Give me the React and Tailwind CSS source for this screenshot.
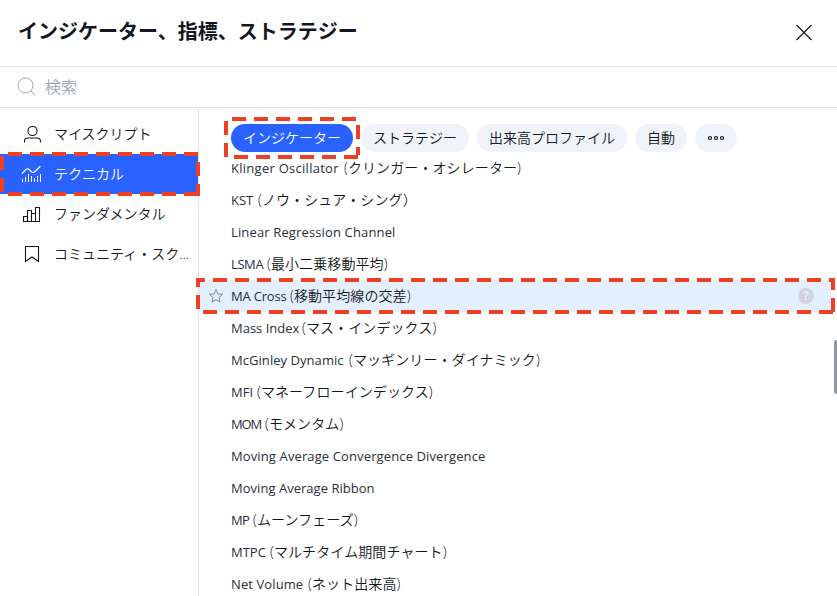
import clsx from 'clsx';

const nav = [
  { id: 'scripts', label: 'マイスクリプト', Icon: PersonIcon },
  { id: 'technical', label: 'テクニカル', Icon: TechnicalIcon, active: true },
  { id: 'fundamental', label: 'ファンダメンタル', Icon: BarsIcon },
  { id: 'community', label: 'コミュニティ・スク...', Icon: BookmarkIcon },
];

const chips = ['インジケーター', 'ストラテジー', '出来高プロファイル', '自動'];

const rows = [
  { latin: 'Klinger Oscillator', w: 'w-[113px] tracking-[0.27px]', ja: '(クリンガー・オシレーター)' },
  { latin: 'KST', w: 'w-[27px]', ja: '(ノウ・シュア・シング）' },
  { latin: 'Linear Regression Channel', w: 'w-[170px] tracking-[0.14px]' },
  { latin: 'LSMA', w: 'w-[36px] tracking-[-0.4px]', ja: '(最小二乗移動平均)' },
  { latin: 'MA Cross', w: 'w-[59px] tracking-[-0.2px]', ja: '(移動平均線の交差)', selected: true },
  { latin: 'Mass Index', w: 'w-[71px]', ja: '(マス・インデックス)' },
  { latin: 'McGinley Dynamic', w: 'w-[118px] tracking-[0.05px]', ja: '(マッギンリー・ダイナミック)' },
  { latin: 'MFI', w: 'w-[26px]', ja: '(マネーフローインデックス)' },
  { latin: 'MOM', w: 'w-[34px] tracking-[-1.2px]', ja: '(モメンタム)' },
  { latin: 'Moving Average Convergence Divergence', w: 'w-[260px] tracking-[0.12px]' },
  { latin: 'Moving Average Ribbon', w: 'w-[150px] tracking-[0.03px]' },
  { latin: 'MP', w: 'w-[22px] tracking-[-0.8px]', ja: '(ムーンフェーズ)' },
  { latin: 'MTPC', w: 'w-[39px]', ja: '(マルチタイム期間チャート)' },
  { latin: 'Net Volume', w: 'w-[77px] tracking-[0.1px]', ja: '(ネット出来高)' },
];

function PersonIcon() {
  return (
    <svg width="28" height="28" viewBox="0 0 28 28" fill="none" stroke="currentColor" strokeWidth="1.1">
      <rect x="10" y="6.5" width="9" height="9" rx="4.3" />
      <path d="M6.5 22.5v-1.2c0-2 1.5-3.3 3.5-3.3h9c2 0 3.5 1.3 3.5 3.3v1.2" />
    </svg>
  );
}

function TechnicalIcon() {
  return (
    <svg width="28" height="28" viewBox="0 0 28 28" fill="none" stroke="currentColor">
      <path d="M4 13.5l4.2-4.2q1.3-1 2.6 0l3 2.7q1.3 1 2.6 0l6-5.7" strokeWidth="1.2" />
      <path d="M4.5 19v3M7.5 17v5M10.5 14v8M13.5 16v6M16.5 18v4M19.5 16v6M22.5 14v8" />
    </svg>
  );
}

function BarsIcon() {
  return (
    <svg width="28" height="28" viewBox="0 0 28 28" fill="none" stroke="currentColor" strokeWidth="1.1">
      <path d="M5.5 21.5v-5h4v5M9.5 21.5v-11h4v11M13.5 13.5h4M17.5 21.5v-14h4v14M5 21.5h17" />
    </svg>
  );
}

function BookmarkIcon() {
  return (
    <svg width="28" height="28" viewBox="0 0 28 28" fill="none" stroke="currentColor" strokeWidth="1.1">
      <path d="M7.5 6.5h13v15l-6.5-4.5l-6.5 4.5z" />
    </svg>
  );
}

function Marker({ d, className }) {
  return (
    <svg className={clsx('absolute pointer-events-none overflow-visible', className)} fill="none">
      <path d={d} stroke="#ee4023" strokeWidth="4" strokeDasharray="14 8" />
    </svg>
  );
}

function Row({ latin, w, ja, selected }) {
  return (
    <li className={clsx('relative flex h-8 shrink-0 items-center pl-8', selected && 'bg-[#e3effd] mr-[6px]')}>
      {selected && (
        <svg className="absolute left-[9px] top-2" width="16" height="16" viewBox="0 0 16 16" fill="none" stroke="#868993">
          <path d="M8 1.5l1.9 4.4 4.7.4-3.6 3.1 1.1 4.7L8 11.6l-4.1 2.5L5 9.4 1.400 6.300l4.700-.4z" />
        </svg>
      )}
      <span className={clsx('whitespace-nowrap pt-px text-[13px] text-[#2a2e39]', w)}>{latin}</span>
      {ja && <span className="whitespace-nowrap pb-0.5 font-[350] tracking-[0.1px]">{ja}</span>}
      {selected && (
        <span className="absolute right-[17px] top-2 flex size-4 items-center justify-center rounded-full bg-[#d1d4dc] text-[12px] font-bold leading-none text-[#e9f2fd]">
          ?
        </span>
      )}
      {selected && (
        <Marker
          className="-left-[3px] -top-[2px] h-9 w-[639px]"
          d="M0 2h9M17 2H639M2 0v9M2 17v14M7 34H637M637 0v12M637 20v14"
        />
      )}
    </li>
  );
}

export default function App() {
  return (
    <div className="flex h-[596px] w-[837px] flex-col overflow-hidden bg-white font-['Open_Sans','Noto_Sans_CJK_JP',sans-serif] text-[14px] text-[#131722]">
      <header className="flex h-[67px] shrink-0 items-center justify-between border-b border-[#e0e3eb] pl-[18px] pr-6">
        <h1 className="pb-0.5 text-[20px] font-semibold leading-7">インジケーター、指標、ストラテジー</h1>
        <svg width="18" height="18" viewBox="0 0 18 18" fill="none" stroke="currentColor" strokeWidth="1.2">
          <path d="M1.5 1l15 15M16.5 1l-15 15" />
        </svg>
      </header>

      <div className="flex h-[41px] shrink-0 items-center border-b border-[#e0e3eb] pl-[17px] text-[16px] text-[#a3a6af]">
        <svg width="20" height="20" viewBox="0 0 20 20" fill="none" stroke="currentColor">
          <circle cx="8.5" cy="8.5" r="7.5" />
          <path d="M13.8 13.8l4.7 4.7" />
        </svg>
        <span className="ml-2 font-[350]">検索</span>
      </div>

      <div className="flex min-h-0 flex-1">
        <nav className="flex w-[199px] shrink-0 flex-col border-r border-[#e0e3eb] pt-[6px]">
          {nav.map(({ id, label, Icon, active }) => (
            <div
              key={id}
              className={clsx('relative flex h-10 items-center gap-2 pl-[18px]', active && 'bg-[#2962ff] text-white')}
            >
              <Icon />
              <span className="whitespace-nowrap pb-0.5 font-[350]">{label}</span>
              {active && (
                <Marker
                  className="-top-[2px] left-0 h-11 w-[200px]"
                  d="M8 2H198M2 4V40M198 10V44M8 42H198"
                />
              )}
            </div>
          ))}
        </nav>

        <main className="relative flex min-w-0 flex-1 flex-col">
          <div className="flex shrink-0 gap-2 pl-8 pt-4">
            {chips.map((chip, i) => (
              <div
                key={chip}
                className={clsx(
                  'relative flex h-7 items-center rounded-full px-3 pb-0.5 font-[350]',
                  i === 0 ? 'bg-[#2962ff] text-white' : 'bg-[#f0f3fa]'
                )}
              >
                {chip}
                {i === 0 && (
                  <Marker
                    className="-left-[7px] -top-[7px] h-[42px] w-[136px]"
                    d="M8 2H132M2 4V41M10 40H136M134 8V38"
                  />
                )}
              </div>
            ))}
            <div className="flex h-7 w-[42px] items-center justify-center rounded-full bg-[#f0f3fa]">
              <svg width="18" height="6" viewBox="0 0 18 6" fill="none" stroke="currentColor" strokeWidth="1.2">
                <circle cx="3" cy="3" r="1.5" />
                <circle cx="9" cy="3" r="1.5" />
                <circle cx="15" cy="3" r="1.5" />
              </svg>
            </div>
          </div>
          <ul className="flex min-h-0 flex-1 flex-col overflow-visible">
            {rows.map((row) => (
              <Row key={row.latin} {...row} />
            ))}
          </ul>
          <div className="absolute right-0 top-[232px] h-[54px] w-[3px] rounded-l-sm bg-[#9598a1]" />
        </main>
      </div>
    </div>
  );
}
